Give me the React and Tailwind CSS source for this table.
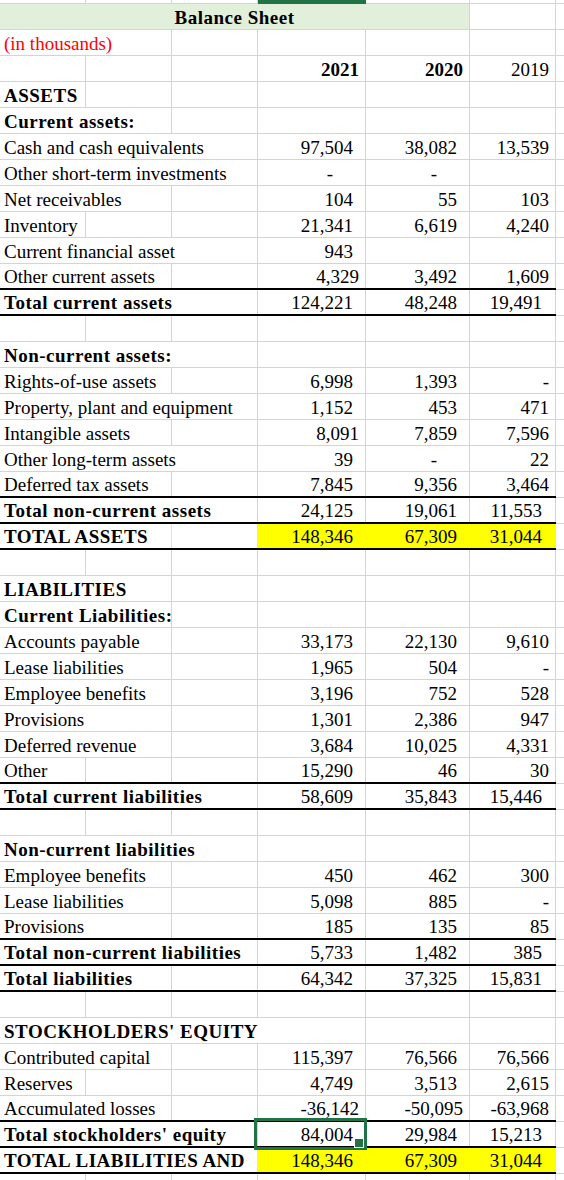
import React from "react";

const G = "border-[#d4d4d4]";

const rows = [
  { title: true },
  { l: "(in thousands)", s: 2, red: true, c: ["", "", ""] },
  { years: true },
  { l: "ASSETS", s: 1, b: true },
  { l: "Current assets:", s: 2, b: true },
  { l: "Cash and cash equivalents", s: 3, c: ["97,504", "38,082", "13,539"] },
  { l: "Other short-term investments", s: 3, c: ["-", "-", ""] },
  { l: "Net receivables", s: 2, c: ["104", "55", "103"] },
  { l: "Inventory", s: 1, c: ["21,341", "6,619", "4,240"] },
  { l: "Current financial asset", s: 3, c: ["943", "", ""] },
  { l: "Other current assets", s: 2, c: [["4,329", "n"], "3,492", "1,609"], t: true },
  { l: "Total current assets", s: 3, b: true, c: ["124,221", "48,248", ["19,491", "w"]], t: true },
  {},
  { l: "Non-current assets:", s: 3, b: true },
  { l: "Rights-of-use assets", s: 2, c: ["6,998", "1,393", "-"] },
  { l: "Property, plant and equipment", s: 3, c: ["1,152", "453", "471"] },
  { l: "Intangible assets", s: 2, c: [["8,091", "n"], "7,859", "7,596"] },
  { l: "Other long-term assets", s: 3, c: ["39", "-", "22"] },
  { l: "Deferred tax assets", s: 2, c: ["7,845", "9,356", "3,464"], t: true },
  { l: "Total non-current assets", s: 3, b: true, c: ["24,125", "19,061", ["11,553", "w"]], t: true },
  { l: "TOTAL ASSETS", s: 2, b: true, c: ["148,346", "67,309", ["31,044", "w"]], t: true, y: true },
  {},
  { l: "LIABILITIES", s: 2, b: true },
  { l: "Current Liabilities:", s: 2, b: true },
  { l: "Accounts payable", s: 2, c: ["33,173", "22,130", "9,610"] },
  { l: "Lease liabilities", s: 2, c: ["1,965", "504", "-"] },
  { l: "Employee benefits", s: 2, c: ["3,196", "752", "528"] },
  { l: "Provisions", s: 2, c: ["1,301", "2,386", "947"] },
  { l: "Deferred revenue", s: 2, c: ["3,684", "10,025", "4,331"] },
  { l: "Other", s: 1, c: ["15,290", "46", "30"], t: true },
  { l: "Total current liabilities", s: 3, b: true, c: ["58,609", "35,843", ["15,446", "w"]], t: true },
  {},
  { l: "Non-current liabilities", s: 3, b: true },
  { l: "Employee benefits", s: 2, c: ["450", "462", "300"] },
  { l: "Lease liabilities", s: 2, c: ["5,098", "885", "-"] },
  { l: "Provisions", s: 2, c: ["185", "135", "85"], t: true },
  { l: "Total non-current liabilities", s: 3, b: true, c: ["5,733", "1,482", ["385", "w"]], t: true },
  { l: "Total liabilities", s: 2, b: true, c: ["64,342", "37,325", ["15,831", "w"]], t: true },
  {},
  { l: "STOCKHOLDERS' EQUITY", s: 4, b: true },
  { l: "Contributed capital", s: 2, c: ["115,397", "76,566", "76,566"] },
  { l: "Reserves", s: 1, c: ["4,749", "3,513", "2,615"] },
  { l: "Accumulated losses", s: 2, c: [["-36,142", "n"], ["-50,095", "n"], "-63,968"], t: true },
  { l: "Total stockholders' equity", s: 3, b: true, c: ["84,004", "29,984", ["15,213", "w"]], t: true, sel: true },
  { l: "TOTAL LIABILITIES AND", s: 3, b: true, c: ["148,346", "67,309", ["31,044", "w"]], t: true, y: true },
  {},
];

const labelW = ["w-[86px]", "w-[172px]", "w-[258px]", "w-[366px]"];
const numW = ["w-[108px]", "w-[104px]", "w-[86px]"];

function padFor(val, kind, i) {
  if (val === "-") return i < 2 ? "pr-[32px]" : "pr-[6px]";
  if (kind === "n") return "pr-[6px]";
  if (kind === "w") return "pr-[13px]";
  return i < 2 ? "pr-[12px]" : "pr-[6px]";
}

function Selection() {
  return (
    <div className="absolute left-[-4px] top-[-4px] w-[113px] h-[32px] border-[3px] border-[#217346] z-10 pointer-events-none">
      <div className="absolute left-[97px] top-[17px] w-[10px] h-[10px] bg-[#217346] border border-white" />
    </div>
  );
}

function Row({ r }) {
  const bottom = r.t ? "border-b-2 border-black" : `border-b ${G}`;
  if (r.title) {
    return (
      <div className="flex h-[26px]">
        <div className={`flex w-[556px] h-[26px] box-border ${bottom}`}>
          <div className={`w-[470px] h-full bg-[#e2efda] border-r ${G} flex items-end justify-center pb-[0px] font-bold tracking-[0.5px]`}>
            <span>Balance Sheet</span>
          </div>
          <div className={`w-[86px] h-full border-r ${G}`} />
        </div>
        <div className={`w-[8px] h-[26px] border-b ${G}`} />
      </div>
    );
  }
  if (r.years) {
    const ys = [["2021", true], ["2020", true], ["2019", false]];
    return (
      <div className="flex h-[26px]">
        <div className={`flex w-[556px] h-[26px] box-border ${bottom}`}>
          <div className={`w-[86px] h-full border-r ${G}`} />
          <div className={`w-[86px] h-full border-r ${G}`} />
          <div className={`w-[86px] h-full border-r ${G}`} />
          {ys.map(([y, b], i) => (
            <div
              key={i}
              className={`${numW[i]} h-full border-r ${G} flex items-end justify-end pr-[6px] ${b ? "font-bold" : ""}`}
            >
              <span>{y}</span>
            </div>
          ))}
        </div>
        <div className={`w-[8px] h-[26px] border-b ${G}`} />
      </div>
    );
  }
  const s = r.s || 1;
  const cells = r.c || ["", "", ""];
  const labelBorder = r.y ? "border-[#ffff00]" : G;
  const extra = [];
  for (let k = s; k < 3; k++) extra.push(k);
  return (
    <div className="flex h-[26px]">
      <div className={`flex w-[556px] h-[26px] box-border ${bottom}`}>
        <div
          className={`${labelW[s - 1]} h-full border-r ${labelBorder} flex items-end pl-[4px] overflow-hidden whitespace-nowrap ${
            r.b ? "font-bold tracking-[0.5px]" : ""
          } ${r.red ? "text-[#ff0000]" : ""}`}
        >
          <span>{r.l || ""}</span>
        </div>
        {extra.map((k) => (
          <div key={k} className={`w-[86px] h-full border-r ${k === 2 && r.y ? "border-[#ffff00]" : G}`} />
        ))}
        {cells.map((cv, i) => {
          if (s === 4 && i === 0) return null;
          const val = Array.isArray(cv) ? cv[0] : cv;
          const kind = Array.isArray(cv) ? cv[1] : "";
          return (
            <div
              key={i}
              className={`${numW[i]} h-full border-r ${r.y ? "bg-[#ffff00] border-[#ffff00]" : G} flex items-end justify-end ${padFor(
                val,
                kind,
                i
              )} whitespace-nowrap ${r.sel && i === 0 ? "relative" : ""}`}
            >
              <span>{val}</span>
              {r.sel && i === 0 ? <Selection /> : null}
            </div>
          );
        })}
      </div>
      <div className={`w-[8px] h-[26px] border-b ${G}`} />
    </div>
  );
}

export default function App() {
  return (
    <div className="w-[564px] h-[1180px] overflow-hidden bg-white text-black font-['Liberation_Serif',serif] text-[19px] leading-[22px]">
      <div className="flex h-[4px]">
        <div className={`flex w-[556px] h-[4px] box-border border-b ${G}`}>
          <div className={`w-[86px] h-full border-r ${G}`} />
          <div className={`w-[86px] h-full border-r ${G}`} />
          <div className={`w-[86px] h-full border-r ${G}`} />
          <div className="w-[108px] h-[4px] bg-[#217346]" />
          <div className={`w-[104px] h-full border-r ${G}`} />
          <div className={`w-[86px] h-full border-r ${G}`} />
        </div>
        <div className={`w-[8px] h-[4px] border-b ${G}`} />
      </div>
      {rows.map((r, idx) => (
        <Row key={idx} r={r} />
      ))}
    </div>
  );
}
